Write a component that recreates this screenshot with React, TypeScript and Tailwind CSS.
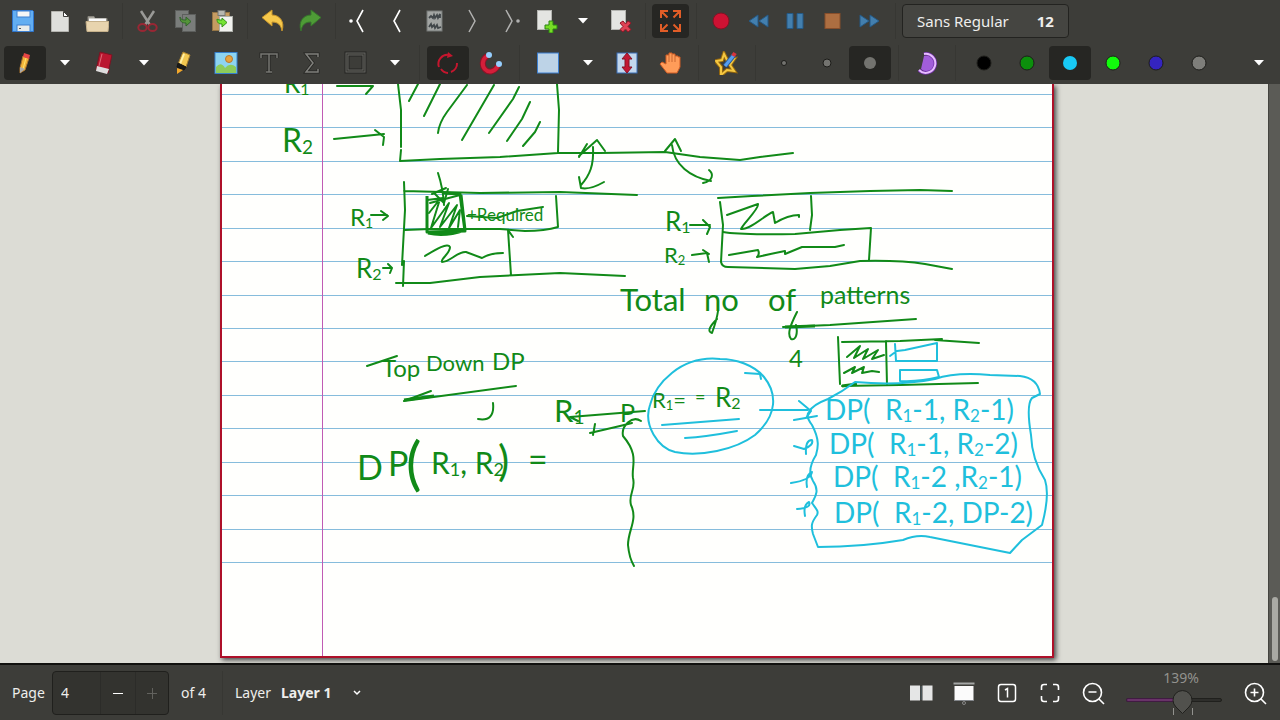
import { useState } from 'react';
import type { ReactNode } from 'react';

const GREEN = '#118a18';
const CYAN = '#1fbfdc';

interface ToolProps {
  label: string;
  active?: boolean;
  wide?: boolean;
  dim?: boolean;
  children: ReactNode;
}

function Tool({ label, active, wide, dim, children }: ToolProps) {
  return (
    <button
      aria-label={label}
      title={label}
      className={`flex h-[34px] shrink-0 items-center justify-center rounded-[4px] ${
        wide ? 'w-[42px]' : 'w-[37px]'
      } ${active ? 'bg-[#262623]' : 'hover:bg-[#4a4a46]'} ${dim ? 'opacity-60' : ''}`}
    >
      <svg viewBox="0 0 24 24" className="h-6 w-6" fill="none">
        {children}
      </svg>
    </button>
  );
}

function Caret({ label, small }: { label: string; small?: boolean }) {
  return (
    <button
      aria-label={label}
      className={`flex h-[34px] shrink-0 items-center justify-center ${small ? 'w-[35px]' : 'w-[37px]'}`}
    >
      <svg viewBox="0 0 10 6" className="h-[6px] w-[10px]" fill="#fff">
        <path d="M0 0h10L5 5.5z" />
      </svg>
    </button>
  );
}

function Sep({ small }: { small?: boolean }) {
  return (
    <div className={`flex h-9 shrink-0 justify-center ${small ? 'w-[13px]' : 'w-[14px]'}`}>
      <div className="w-px bg-[#373733]" />
    </div>
  );
}

function FileRow() {
  return (
    <div className="flex h-[42px] items-center overflow-hidden pl-1">
      <Tool label="Save">
        <path d="M1.5 1.5h20l1 1v20h-21z" fill="#62aef2" stroke="#2f74cc" />
        <rect x="6" y="2" width="13" height="6" fill="#f4f6f6" stroke="#3f80d0" />
        <rect x="6" y="16" width="13" height="6.500" fill="#e8eceb" stroke="#3f80d0" />
        <path d="M8 19.500h2" stroke="#555" />
      </Tool>
      <Tool label="New">
        <path d="M3.500 2.500h12l5 5v15h-17z" fill="#dedfdc" stroke="#b4b4af" />
        <path d="M15.500 2.500v5h5z" fill="#fff" stroke="#3d3d39" />
      </Tool>
      <Tool label="Open">
        <path d="M3 12V7.500h6l1 2h12V13" fill="#a8a59c" stroke="#88867e" />
        <path d="M4 9.500h17v4H4z" fill="#fafafa" />
        <path d="M1 12.500h23l-1 10H2z" fill="#e8d4ae" stroke="#c6b18b" />
      </Tool>
      <Sep />
      <Tool label="Cut">
        <path d="m5 2 9 14M18 2 9 16" stroke="#9a9a97" strokeWidth="2.500" />
        <ellipse cx="6.500" cy="18.500" rx="4.200" ry="3.500" stroke="#982734" strokeWidth="2" />
        <ellipse cx="16.500" cy="18.500" rx="4.200" ry="3.500" stroke="#982734" strokeWidth="2" />
      </Tool>
      <Tool label="Copy" dim>
        <rect x="2.500" y="1.500" width="13" height="17" fill="#a4a8a7" stroke="#737775" />
        <rect x="9.500" y="5.500" width="13" height="17" fill="#a4a8a7" stroke="#737775" />
        <path d="M7 8c0 5 2 6 6 6v3l5-4.500-5-4.500v3c-3 0-5 0-6-3z" fill="#64cf38" stroke="#297d22" />
      </Tool>
      <Tool label="Paste">
        <rect x="2.500" y="3.500" width="17" height="18" fill="#c69c62" stroke="#957545" />
        <rect x="8" y="1.500" width="7" height="5" fill="#b7b7b0" stroke="#767773" />
        <rect x="9.500" y="7.500" width="13" height="15" fill="#f1f2ef" stroke="#aeb0ab" />
        <path d="M7 10c0 4 2 5 5 5v3l5-4.500-5-4.500v2c-2 0-4 0-5-1z" fill="#75e333" stroke="#359418" />
      </Tool>
      <Sep />
      <Tool label="Undo">
        <path d="M1 8.500 11 1v5c8 0 13 7 10 16-1-6-4-9-10-9v4z" fill="#f6c84b" stroke="#c6952c" />
      </Tool>
      <Tool label="Redo">
        <path d="M23 8.500 13 1v5C5 6 0 13 3 22c1-6 4-9 10-9v4z" fill="#4e9b36" stroke="#36772c" />
      </Tool>
      <Sep />
      <Tool label="First page">
        <circle cx="2" cy="12" r="1.800" fill="#fff" />
        <path d="M14 1 8 12l6 11" stroke="#fff" strokeWidth="1.600" />
      </Tool>
      <Tool label="Previous page">
        <path d="M14 1 8 12l6 11" stroke="#fff" strokeWidth="1.600" />
      </Tool>
      <Tool label="Annotated page">
        <rect x="4" y="2" width="15" height="20" fill="#a2a5a3" stroke="#777a78" />
        <path d="m6 9 2-2 2 2 1-3 1 3 2-3 1 3 2-4v4M6 18l2-3 1 3 2-2 1 3 2-3 1 3 3-1" stroke="#41474a" strokeWidth="1.800" />
      </Tool>
      <Tool label="Next page" dim>
        <path d="m9 1 6 11L9 23" stroke="#fff" strokeWidth="1.500" />
      </Tool>
      <Tool label="Last page" dim>
        <path d="m9 1 6 11L9 23" stroke="#fff" strokeWidth="1.500" />
        <circle cx="21" cy="12" r="1.800" fill="#fff" />
      </Tool>
      <Tool label="Insert page">
        <rect x="3.500" y="1.500" width="14" height="19" fill="#e4e5e2" stroke="#b4b5b1" />
        <path d="M15 12h4v4h4v4h-4v4h-4v-4h-4v-4h4z" fill="#77dd25" stroke="#2b8512" />
      </Tool>
      <Caret label="Insert page options" />
      <Tool label="Delete page">
        <rect x="3.500" y="1.500" width="14" height="19" fill="#e4e5e2" stroke="#b4b5b1" />
        <path d="m12 14 3-2 2.500 3 2.500-3 3 2-3 3.500 3 3-3 2.500-2.500-3-2.500 3-3-2.500 3-3z" fill="#e04254" stroke="#911727" />
      </Tool>
      <Sep />
      <Tool label="Fullscreen" active>
        <g stroke="#e25d27" strokeWidth="2">
          <path d="M8.500 8.500 3 3m-1 6V2h7M14.500 8.500 20 3m-6-1h7v7M8.500 15.500 3 21m-1-6v7h7M14.500 15.500 20 21m-6 1h7v-7" />
        </g>
      </Tool>
      <Sep />
      <Tool label="Record">
        <circle cx="11" cy="12" r="8" fill="#ce1233" stroke="#811325" />
      </Tool>
      <Tool label="Rewind">
        <path d="M11 6v12L2 12zM21 6v12l-9-6z" fill="#437fae" stroke="#245985" />
      </Tool>
      <Tool label="Pause">
        <path d="M3 4.500h6v15H3zM13 4.500h6v15h-6z" fill="#437fae" stroke="#245985" />
      </Tool>
      <Tool label="Stop">
        <rect x="4" y="4.500" width="15" height="15" fill="#ad6e41" stroke="#874e2b" />
      </Tool>
      <Tool label="Forward">
        <path d="M2 6v12l9-6zM12 6v12l9-6z" fill="#437fae" stroke="#245985" />
      </Tool>
      <Sep />
      <button className="flex h-[34px] shrink-0 items-center rounded-[4px] border border-[#232320] bg-[#454541] px-[14px] text-[15px] text-[#eeeeec]">
        <span className="pr-7">Sans Regular</span>
        <b>12</b>
      </button>
    </div>
  );
}

function Dot({ r, color, edge }: { r: number; color: string; edge?: boolean }) {
  return <circle cx="12" cy="12" r={r} fill={color} stroke={edge ? '#1d1d1a' : 'none'} />;
}

function ToolRow() {
  return (
    <div className="flex h-[42px] items-center gap-px overflow-hidden px-1">
      <Tool label="Pen" wide active>
        <path d="m10 5 6 2-4 12-5 3 0-5z" fill="#f4b63a" stroke="#aa732e" />
        <path d="m11 2 6 2-1 4-6-2z" fill="#e64545" />
        <path d="m13 7-3 11" stroke="#ffe270" />
        <path d="m7 16 5 2-5 4z" fill="#aaa" />
      </Tool>
      <Caret label="Pen options" small />
      <Tool label="Eraser" wide>
        <path d="m8 1 12 3-4 18-12-3z" fill="#ba1730" stroke="#7b1422" />
        <path d="m5 15 12 3-2 5-11-3z" fill="#dedede" />
        <path d="m10 3-3 12" stroke="#df6b78" />
      </Tool>
      <Caret label="Eraser options" small />
      <Tool label="Highlighter" wide>
        <path d="m12 1 7 3-4 12-8-3z" fill="#f2c750" stroke="#aa812f" />
        <path d="m13 3-4 10" stroke="#fff0a4" strokeWidth="2" />
        <path d="m7 12 8 4-2 3-7-3z" fill="#1b1b18" stroke="#161613" />
        <path d="m6 17 6 2-6 4z" fill="#f3a82b" />
      </Tool>
      <Tool label="Image" wide>
        <rect x="1" y="1.500" width="22" height="21" fill="#8ed4f0" stroke="#3680cd" />
        <circle cx="15" cy="8" r="3.500" fill="#e8a33c" stroke="#b8782d" />
        <path d="M2 16q5-6 9 1 5-6 11-1v6H2z" fill="#8dcc5b" />
      </Tool>
      <Tool label="Text" wide>
        <path d="M4 7V3h16v4M12 3v18M9 21h6" stroke="#252522" strokeWidth="3" />
        <path d="M4 7V3h16v4M12 3v18M9 21h6" stroke="#777773" strokeWidth="1.500" />
      </Tool>
      <Tool label="Formula" wide>
        <path d="M18 6V3H6l7 9-7 9h12v-3" stroke="#252522" strokeWidth="3" />
        <path d="M18 6V3H6l7 9-7 9h12v-3" stroke="#80807c" strokeWidth="1.500" />
      </Tool>
      <Tool label="Shape" wide>
        <rect x="4" y="3" width="17" height="17" stroke="#252522" strokeWidth="5" />
        <rect x="4" y="3" width="17" height="17" stroke="#666662" strokeWidth="3" />
        <rect x="4" y="3" width="17" height="17" stroke="#30302d" />
      </Tool>
      <Caret label="Shape options" small />
      <Sep small />
      <Tool label="Shape recognizer" wide active>
        <path d="M3 16A9 9 0 0 1 13 4M21 12a9 9 0 0 1-6 9M12 22a9 9 0 0 1-7-4" stroke="#c5162e" strokeWidth="2" />
        <path d="m12 1 5 4-6 2z" fill="#c5162e" />
      </Tool>
      <Tool label="Snapping" wide>
        <path d="M8 5c-11 8 2 24 11 10" stroke="#8b1428" strokeWidth="6" />
        <path d="M8 5c-11 8 2 24 11 10" stroke="#d51f3a" strokeWidth="4" />
        <circle cx="10" cy="4" r="3" fill="#96cfff" />
        <circle cx="20" cy="13" r="3" fill="#96cfff" />
      </Tool>
      <Sep small />
      <Tool label="Select rectangle" wide>
        <rect x="1.500" y="2" width="21" height="20" fill="#bdd3e7" stroke="#3c7fd0" />
      </Tool>
      <Caret label="Selection options" small />
      <Tool label="Vertical space" wide>
        <rect x="2" y="2" width="20" height="20" fill="#c2d7ed" stroke="#386cb5" />
        <path d="m12 2 5 6h-3v8h3l-5 6-5-6h3V8H7z" fill="#c31835" stroke="#851527" />
      </Tool>
      <Tool label="Hand" wide>
        <path d="M8 13V4h3V2h3v1h3v2h3v1h2v10l-3 6H9l-7-9 2-2z" fill="#ff9c59" stroke="#d05c25" />
        <path d="M11 4v7m3-8v8m3-6v6" stroke="#c96732" />
      </Tool>
      <Sep small />
      <Tool label="Default tool" wide>
        <path d="m9 3 3 6 7-1-4 6 4 6-7-1-6 5v-8L1 10l6-1z" stroke="#94670e" strokeWidth="4" />
        <path d="m9 3 3 6 7-1-4 6 4 6-7-1-6 5v-8L1 10l6-1z" stroke="#f4c741" strokeWidth="2" />
        <path d="M10 15 19 4" stroke="#24589b" strokeWidth="5" />
        <path d="m10 15 9-11" stroke="#579eee" strokeWidth="3" />
        <path d="m18 5 2-3" stroke="#d8343b" strokeWidth="4" />
      </Tool>
      <Sep small />
      <Tool label="Fine" wide>
        <Dot r={2.5} color="#73736f" edge />
      </Tool>
      <Tool label="Medium" wide>
        <Dot r={4} color="#73736f" edge />
      </Tool>
      <Tool label="Thick" wide active>
        <Dot r={6} color="#73736f" />
      </Tool>
      <Sep small />
      <Tool label="Fill" wide>
        <path d="M9 5a8 8 0 1 1-3 13z" fill="#a15dd9" />
        <path d="M9 3a9.500 9.500 0 1 1-5 16" stroke="#7132a6" strokeWidth="3.500" />
        <path d="M9 3a9.500 9.500 0 1 1-5 16" stroke="#e7bcff" strokeWidth="2" />
      </Tool>
      <Sep small />
      <Tool label="Black" wide>
        <Dot r={7} color="#000" edge />
      </Tool>
      <Tool label="Green" wide>
        <Dot r={7} color="#0c8f0c" edge />
      </Tool>
      <Tool label="Light blue" wide active>
        <Dot r={7} color="#18c9f5" />
      </Tool>
      <Tool label="Light green" wide>
        <Dot r={7} color="#12fb0c" edge />
      </Tool>
      <Tool label="Blue" wide>
        <Dot r={7} color="#3424c0" edge />
      </Tool>
      <Tool label="Gray" wide>
        <Dot r={7} color="#7e7e7a" edge />
      </Tool>
      <div className="ml-auto">
        <Caret label="More tools" small />
      </div>
    </div>
  );
}

// [text, x, baseline, font size], a digit after "_" is a subscript
type Note = [string, number, number, number];

const greenNotes: Note[] = [
  ['R_1', 284, 93, 26],
  ['R_2', 282, 152, 32],
  ['R_1', 350, 226, 24],
  ['R_2', 356, 278, 26],
  ['+Required', 467, 221, 17],
  ['R_1', 665, 231, 26],
  ['R_2', 664, 263, 22],
  ['Total', 620, 311, 31],
  ['no', 704, 311, 31],
  ['of', 768, 311, 31],
  ['patterns', 820, 304, 25],
  ['4', 789, 367, 24],
  ['Top', 382, 377, 24],
  ['Down', 426, 371, 22],
  ['DP', 492, 370, 24],
  ['R_1', 554, 422, 31],
  ['P', 620, 422, 25],
  ['R_1=', 652, 408, 22],
  ['=', 695, 403, 18],
  ['R_2', 715, 407, 26],
  ['D', 357, 480, 34],
  ['P', 388, 476, 34],
  ['(', 406, 484, 58],
  ['R_1, R_2', 431, 474, 30],
  [')', 498, 476, 42],
  ['=', 528, 472, 34],
];

const cyanNotes: Note[] = [
  ['DP(  R_1-1, R_2-1)', 825, 420, 28],
  ['DP(  R_1-1, R_2-2)', 829, 454, 28],
  ['DP(  R_1-2 ,R_2-1)', 833, 487, 28],
  ['DP(  R_1-2, DP-2)', 834, 523, 28],
];

const greenStrokes = [
  'M337 86h36l-7 8M334 139l50-5M375 130l9 7-1 8',
  'M398 84l3 26v37M401 150l-1 11 40-2 60-2 58-4h42l65-1 35 5 40 3 20-3 33-4M557 84l2 26-1 42',
  'M418 84l-9 17M440 84l-16 32M467 85l-20 27q-8 11-9 21M494 85l-32 55M519 87l-6 12-24 34M530 102l-8 17-15 22M540 122l-5 10-12 14',
  'M579 157l8-13M579 156l18-16 8 11M593 147c1 18-3 28-12 38M579 177l2 11q9 2 23-6',
  'M665 151l10-12 6 12M672 145c2 20 18 32 39 36M709 170c5 4 4 11-6 13',
  'M404 182l1 28-3 55M404 261l-1 25M404 191l76 2 80-1 77 3M405 230l25-1h70l25 2q20 0 33-4l-2-31',
  'M508 230l3 45M508 230l5 7M396 283h34l50-6 80-4 65 3',
  'M438 173q5 15 6 32M434 193l10 10 4-14M446 188l-14 6',
  'M429 213l11-14-9 29 18-25-9 24 17-22-8 23 11-18-2 17M427 200l16-2M430 203l30-8',
  'M425 256c10-6 23-14 25-9 0 7-10 12-8 15 8 0 16-11 24-10l16 6q8-5 21-5',
  'M467 216l30 2 20-7 26-4',
  'M371 215h16M381 211l7 5-5 4M383 268h8M388 264l4 4-2 5',
  'M718 198l34-2 58-3 60-2 50-1 32 1M720 202l3 23-2 37q1 5 7 5l67 2 35-3 30-5q40-1 65 3l27 5',
  'M723 232q17 3 72 2l45-4 31-2-2 32M811 196l1 19-2 15',
  'M727 215l31-11c2 4-16 21-17 25 9 1 24-14 32-17l2 11q13-8 24-8v2M729 255l29-5q2 4-1 7 13-3 28-6v3l17-7h33l9-2',
  'M690 225h20M703 220l7 7-3 7M692 255l15-2 2 9M703 250l6 4',
  'M783 327l47-2 86-6M797 312c-7 14-10 22-6 27 5 2 7-6 5-14M718 311q-1 8-6 22-7-2 5-14',
  'M838 337l2 47M842 342l58-1 42-2M886 341l1 44M935 340l44 3M842 386l58-1 78-2',
  'M847 357l13-11-6 12 14-9-5 10 15-9-6 9 12-4M844 373l11-6-3 6 12-6-2 6 10-2 7 1',
  'M367 366l30-10M516 386l-112 15 27-10M493 403q2 19-15 16',
  'M570 417l75-6M570 417l8 4M590 433l30-7 12-3M595 424l-2 11M641 421c-9-6-20 5-18 15 17 20 8 30 10 42 3 12-5 16-2 27 7 15-3 25-3 40 1 11 3 16 6 21',
];

const boldStrokes = [
  'M427 196v36l38-1-5-37-17-1M428 233q17 4 37-3l-4-35',
  'M404 400l30-4M785 327l30-1M842 386l15-2',
];

const cyanStrokes = [
  'M895 344l1 17h41v-18l-32 7-8 1M890 356l4-3M900 370v11q20 1 39-4l-2-7z',
  'M720 359C680 355 655 385 650 405c-7 20 8 43 25 47 25 5 60-2 80-17 23-20 22-42 9-58-10-12-28-18-44-18z',
  'M745 373l15 1 1 5M662 425l77-6M685 438q20-1 52-7M760 410h48M799 401l12 10M794 420l23-4M811 411l-5 7',
  'M828 399q-16 6-19 13-4 4 3 13c8 15 6 23 4 30-5 8-8 18-3 26 7 10 2 16-1 22 4 6 7 8 5 12-6 8-6 11-4 19l5 13q44 0 85-7 14-6 27-3l80 16 12-13 20-15q8-30 3-45-13-20-14-45-5-30 1-37l8-4q-2-16-20-18l-30-1q-35-3-55 4-35 7-80 3-13 10-27 17z',
  'M794 446l10 3q10-4 8-9-7 0-6 14M791 483q20-3 21-11-7 3-5 15M797 509q15-1 12-7-6 3-4 14',
];

function NoteText({ note: [text, x, y, size] }: { note: Note }) {
  return (
    <text x={x} y={y} fontSize={size} className="whitespace-pre">
      {text.split(/(_\d)/).map((part, i) =>
        part.startsWith('_') ? (
          <tspan key={i} baselineShift="-12%" fontSize={Math.round(size * 0.6)}>
            {part[1]}
          </tspan>
        ) : (
          part
        )
      )}
    </text>
  );
}

function Ink({ notes, strokes, color }: { notes: Note[]; strokes: string[]; color: string }) {
  return (
    <g>
      <g fill="none" stroke={color} strokeWidth="2" strokeLinecap="round" strokeLinejoin="round">
        {strokes.map((d) => (
          <path key={d} d={d} />
        ))}
      </g>
      <g fill={color} className="font-['Lato',sans-serif]">
        {notes.map((note, i) => (
          <NoteText key={i} note={note} />
        ))}
      </g>
    </g>
  );
}

function Paper() {
  const rules = Array.from({ length: 15 }, (_, i) => Math.round(94 + i * 33.43) + 0.5);
  return (
    <svg
      viewBox="220 84 834 574"
      className="h-[574px] w-[834px] shrink-0 bg-[#fffffd] shadow-[2px_2px_5px_#444]"
    >
      {rules.map((y) => (
        <path key={y} d={`M222 ${y}h830`} stroke="#86bcdc" />
      ))}
      <path d="M322.500 84v572" stroke="#c05bb4" />
      <Ink notes={greenNotes} strokes={greenStrokes} color={GREEN} />
      <g fill="none" stroke={GREEN} strokeWidth="3" strokeLinejoin="round">
        {boldStrokes.map((d) => (
          <path key={d} d={d} />
        ))}
      </g>
      <Ink notes={cyanNotes} strokes={cyanStrokes} color={CYAN} />
      <path d="M221 84v573h832V84" fill="none" stroke="#ae1029" strokeWidth="2" />
    </svg>
  );
}

function StatusBar() {
  const [page, setPage] = useState('4');
  const [zoom, setZoom] = useState(139);

  return (
    <footer className="flex h-[57px] shrink-0 items-center border-t-2 border-[#11110f] bg-[#3d3d39] pl-3 pr-1 text-[14px] text-[#eeeeec]">
      <label htmlFor="page" className="w-10">
        Page
      </label>
      <div className="flex h-11 w-[117px] items-center rounded-[4px] border border-[#20201d] bg-[#33332f]">
        <input
          id="page"
          value={page}
          onChange={(e) => setPage(e.target.value)}
          className="h-full w-[47px] bg-transparent pl-2 outline-none"
        />
        <button aria-label="Previous" className="flex h-full w-[35px] items-center justify-center border-l border-[#2c2c29]">
          <svg viewBox="0 0 12 12" className="h-3 w-3" stroke="#fff">
            <path d="M1 6.500h10" />
          </svg>
        </button>
        <button aria-label="Next" className="flex h-full w-[34px] items-center justify-center border-l border-[#2c2c29]">
          <svg viewBox="0 0 12 12" className="h-3 w-3" stroke="#62625e">
            <path d="M1 6.500h10M6.500 1v11" />
          </svg>
        </button>
      </div>
      <span className="pl-3">of 4</span>
      <div className="ml-4 mr-3 h-11 w-px bg-[#373733]" />
      <button className="flex items-center gap-[10px]">
        <span>Layer</span>
        <b>Layer 1</b>
        <svg viewBox="0 0 8 6" className="ml-3 h-[6px] w-2" fill="none" stroke="#fff" strokeWidth="1.500">
          <path d="m1 1 3 3 3-3" />
        </svg>
      </button>

      <div className="ml-auto flex items-center gap-px">
        <Tool label="Paired pages" wide>
          <path d="M1 4.500h10v15H1zM13.500 4.500h10v15h-10z" fill="#e5e6e6" />
          <path d="M12.200 5v14" stroke="#52616b" />
        </Tool>
        <Tool label="Presentation" wide>
          <path d="M1.500 1.500h21v2h-21z" fill="#a4a6a5" />
          <path d="M2.500 5h19v14h-19z" fill="#fbfbfb" />
          <path d="M2 19.500h20" stroke="#83868b" />
          <circle cx="12" cy="22" r="1.500" stroke="#888" />
        </Tool>
        <Tool label="Zoom 100%" wide>
          <rect x="3.500" y="3.500" width="17" height="17" rx="2.500" stroke="#fff" strokeWidth="1.500" />
          <path d="m10 9 2.500-1.500v9" stroke="#fff" strokeWidth="1.500" />
        </Tool>
        <Tool label="Zoom fit" wide>
          <path d="M3.500 9V6q0-2.500 2.500-2.500h3M15 3.500h3q2.500 0 2.500 2.500v3M20.500 15v3q0 2.500-2.500 2.500h-3M9 20.500H6q-2.500 0-2.500-2.500v-3" stroke="#fff" strokeWidth="1.600" />
        </Tool>
        <Tool label="Zoom out" wide>
          <circle cx="11.500" cy="11.500" r="9" stroke="#fff" strokeWidth="1.600" />
          <path d="m18 18 5 5M7.500 11h8" stroke="#fff" strokeWidth="1.600" />
        </Tool>
        <div className="relative flex w-[118px] flex-col items-center">
          <label htmlFor="zoom" className="pl-[14px] text-[14px] leading-4 text-[#92928e]">
            {zoom}%
          </label>
          <svg viewBox="0 0 96 30" className="h-[30px] w-24" fill="none">
            <rect x="0.500" y="12.500" width="95" height="3" rx="1.500" fill="#2e2e2b" stroke="#20201d" />
            <rect x="0.500" y="12.500" width="50" height="3" rx="1.500" fill="#693369" stroke="#401b42" />
            <path d="M47.500 22v7M66.500 22v7" stroke="#92928e" />
            <path d="M50 21a9.500 9.500 0 1 1 13 0l-6.500 6.500z" fill="#51514d" stroke="#20201d" />
          </svg>
          <input
            id="zoom"
            type="range"
            min="20"
            max="300"
            value={zoom}
            onChange={(e) => setZoom(Number(e.target.value))}
            className="absolute bottom-1 w-24 opacity-0"
          />
        </div>
        <Tool label="Zoom in" wide>
          <circle cx="11.500" cy="11.500" r="9" stroke="#fff" strokeWidth="1.600" />
          <path d="m18 18 5 5M7.500 11.500h8M11.500 7.500v8" stroke="#fff" strokeWidth="1.600" />
        </Tool>
      </div>
    </footer>
  );
}

export default function App() {
  return (
    <div className="flex h-screen flex-col overflow-hidden bg-[#dcdcd5] font-['Noto_Sans',sans-serif]">
      <header className="shrink-0 bg-[#3d3d39]">
        <FileRow />
        <ToolRow />
      </header>
      <main className="flex min-h-0 flex-1">
        <div className="flex min-w-0 flex-1 items-start justify-center overflow-hidden pl-[6px]">
          <Paper />
        </div>
        <div className="flex w-3 shrink-0 items-end justify-center border-l border-[#44443f] bg-[#5b5b56] pb-[2px]">
          <div className="h-16 w-[6px] rounded-full bg-[#aaaaa4]" />
        </div>
      </main>
      <StatusBar />
    </div>
  );
}
